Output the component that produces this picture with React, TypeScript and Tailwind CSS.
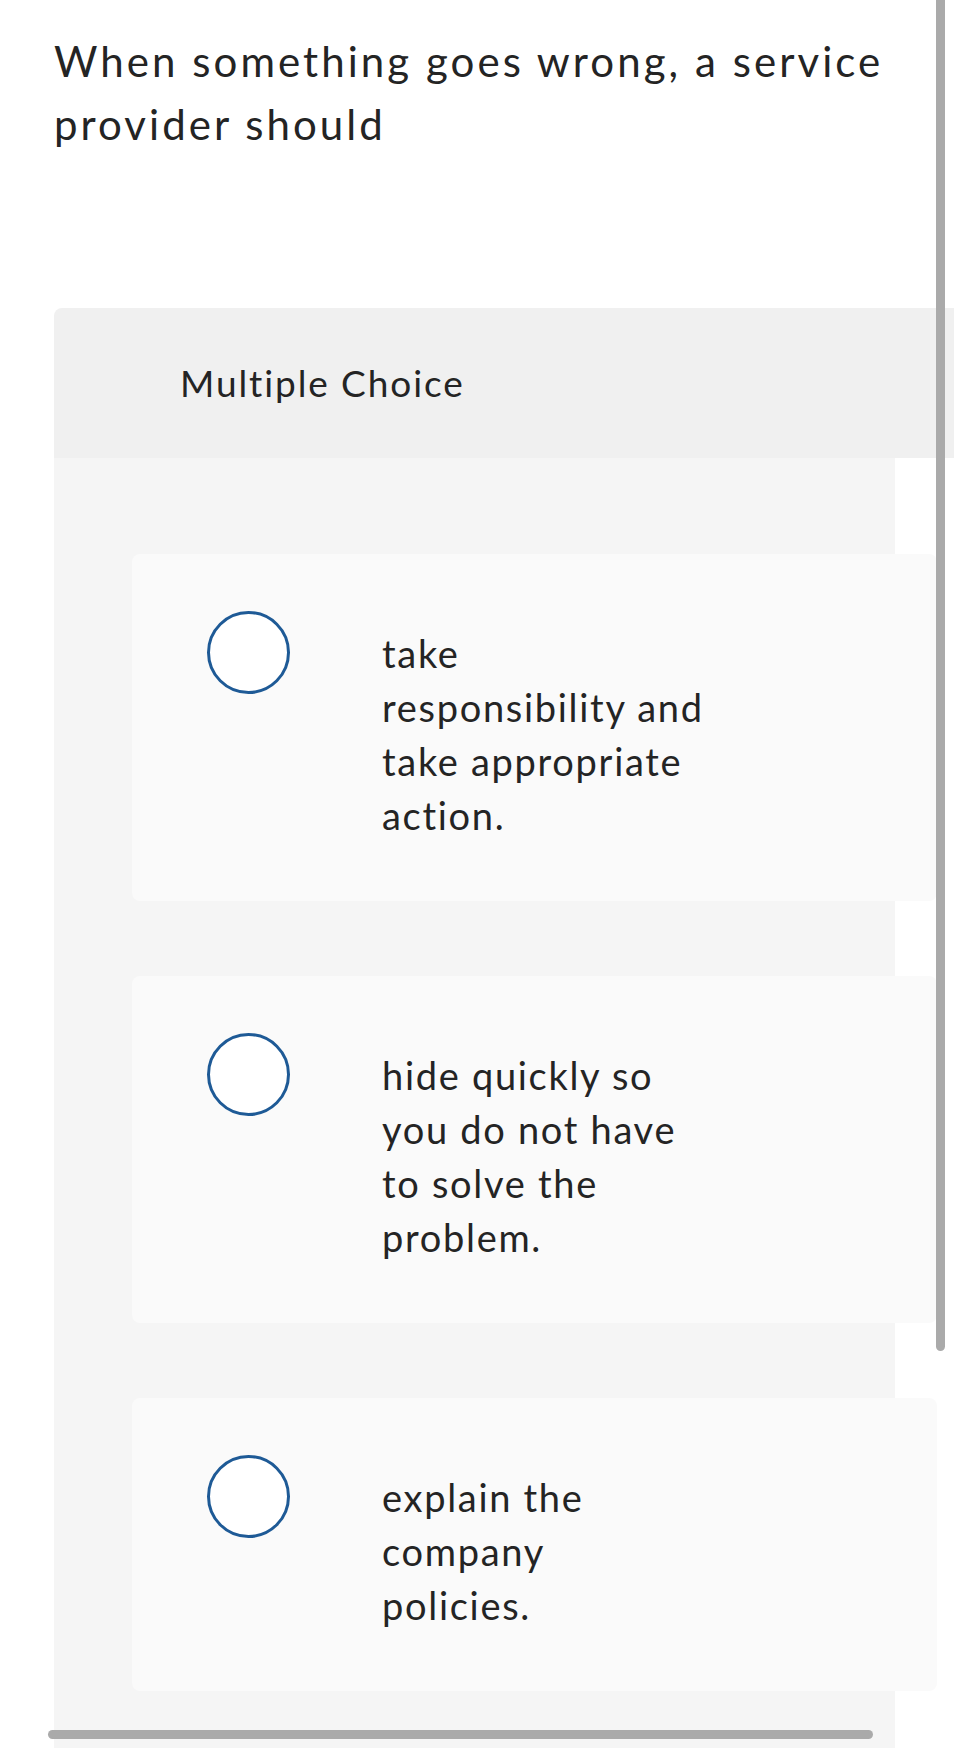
import React from "react";

const options: string[][] = [
  ["take", "responsibility and", "take appropriate", "action."],
  ["hide quickly so", "you do not have", "to solve the", "problem."],
  ["explain the", "company", "policies."],
];

function Radio() {
  return (
    <div className="w-[83px] h-[83px] shrink-0 rounded-full border-[3px] border-[#1e5a96] bg-white" />
  );
}

export default function App() {
  return (
    <div className="relative w-[963px] h-[1755px] overflow-hidden bg-white font-['Lato',sans-serif] text-[#242424]">
      <div className="pl-[54px] pt-[30px]">
        <h1 className="text-[42px] leading-[63px] font-normal tracking-[3.05px]">
          When something goes wrong, a service
          <br />
          provider should
        </h1>
      </div>

      <div className="ml-[54px] mt-[152px]">
        <div className="w-[900px] h-[150px] bg-[#f0f0f0] rounded-tl-lg flex items-center pl-[126px]">
          <span className="text-[37px] leading-[1.2] tracking-[1.9px]">Multiple Choice</span>
        </div>
        <div className="w-[841px] h-[1290px] bg-[#f5f5f5] pt-[96px]">
          <div className="flex flex-col gap-[75px] ml-[78px]">
            {options.map((lines, i) => (
              <div
                key={i}
                className="w-[805px] bg-[#fafafa] rounded-lg flex items-start pt-[57px] pb-[59px] pl-[75px]"
              >
                <Radio />
                <div className="ml-[92px] mt-[15px] text-[38px] leading-[54px] tracking-[1.7px]">
                  {lines.map((l, j) => (
                    <div key={j}>{l}</div>
                  ))}
                </div>
              </div>
            ))}
          </div>
        </div>
      </div>

      <div className="absolute left-[936px] top-0 w-[9px] h-[1351px] bg-[#aaaaaa] rounded-b-full" />
      <div className="absolute left-[48px] top-[1730px] w-[825px] h-[9px] bg-[#aaaaaa] rounded-full" />
    </div>
  );
}
